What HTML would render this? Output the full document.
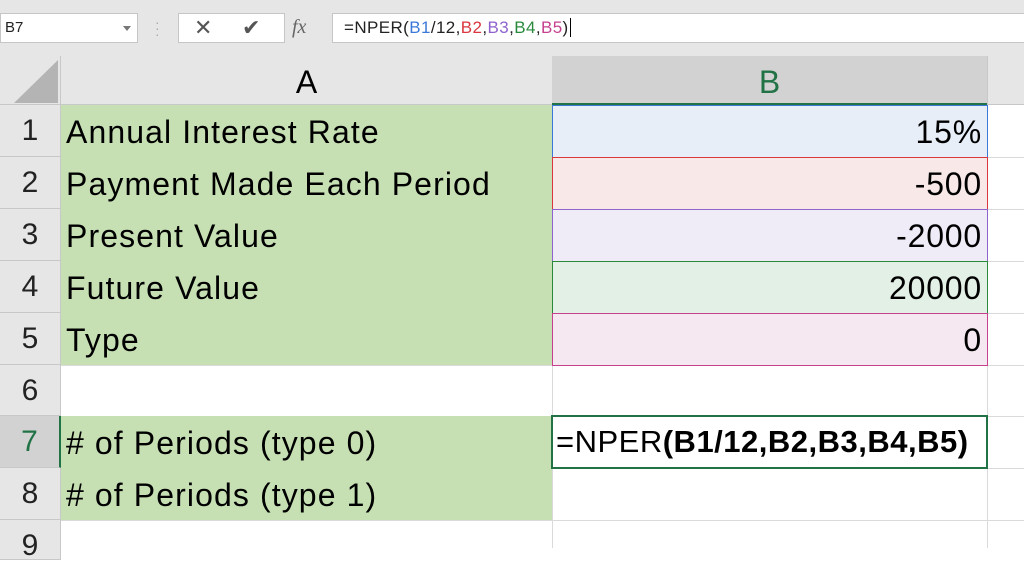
<!DOCTYPE html>
<html><head><style>
*{margin:0;padding:0;box-sizing:border-box}
body{width:1024px;height:548px;overflow:hidden;background:#fff;font-family:"Liberation Sans",sans-serif;position:relative}
.a{position:absolute}
.bar{left:0;top:0;width:1024px;height:56px;background:#e6e6e6}
.box{background:#fff;border:1px solid #c6c6c6}
.cell{position:absolute;font-size:32px;letter-spacing:1.1px;color:#000;line-height:52px;white-space:nowrap}
.num{letter-spacing:0.8px}
.rh{position:absolute;left:0;width:61px;text-align:center;font-size:30px;line-height:52px;background:#e6e6e6;border-bottom:1px solid #c8c8c8;border-right:1px solid #c8c8c8;color:#222}
.gl{position:absolute;background:#dadada}
</style></head><body>
<div class="a bar"></div>
<div class="a box" style="left:0;top:13px;width:138px;height:30px"></div>
<div class="a" style="left:5px;top:19px;font-size:15px;color:#222">B7</div>
<div class="a" style="left:123px;top:26px;width:0;height:0;border-left:4px solid transparent;border-right:4px solid transparent;border-top:5px solid #777"></div>
<div class="a" style="left:155px;top:19px;color:#aaa;font-size:14px;line-height:6px">·<br>·<br>·</div>
<div class="a box" style="left:178px;top:13px;width:107px;height:30px"></div>
<div class="a" style="left:194px;top:15px;font-size:22px;color:#555">✕</div>
<div class="a" style="left:242px;top:15px;font-size:22px;color:#555">✔</div>
<div class="a" style="left:292px;top:16px;font-size:20px;color:#666;font-family:'Liberation Serif',serif;font-style:italic">fx</div>
<div class="a box" style="left:332px;top:13px;width:700px;height:30px"></div>
<div class="a" style="left:344px;top:18px;font-size:17px;letter-spacing:0.4px;color:#222">=NPER(<span style="color:#3c78d8">B1</span>/12,<span style="color:#d9363e">B2</span>,<span style="color:#8e63ce">B3</span>,<span style="color:#2a8a3c">B4</span>,<span style="color:#c6408e">B5</span>)<span style="border-left:1px solid #000;margin-left:1px"></span></div>
<!-- header -->
<div class="a" style="left:0;top:56px;width:1024px;height:49px;background:#e6e6e6;border-bottom:1px solid #c8c8c8"></div>
<div class="a" style="left:14px;top:60px;width:0;height:0;border-left:44px solid transparent;border-bottom:43px solid #b4b4b4"></div>
<div class="a" style="left:60px;top:56px;width:1px;height:49px;background:#c8c8c8"></div>
<div class="a" style="left:61px;top:56px;width:491px;height:49px;text-align:center;font-size:32px;line-height:52px">A</div>
<div class="a" style="left:552px;top:56px;width:435px;height:49px;background:#d2d2d2;border-bottom:2px solid #217346;text-align:center;font-size:32px;line-height:52px;color:#217346">B</div>
<div class="a" style="left:987px;top:56px;width:1px;height:49px;background:#c8c8c8"></div>
<!-- row headers -->
<div class="rh" style="top:105px;height:52px">1</div>
<div class="rh" style="top:157px;height:52px">2</div>
<div class="rh" style="top:209px;height:52px">3</div>
<div class="rh" style="top:261px;height:52px">4</div>
<div class="rh" style="top:313px;height:52px">5</div>
<div class="rh" style="top:365px;height:51px">6</div>
<div class="rh" style="top:416px;height:52px;background:#d2d2d2;color:#217346;border-right:2px solid #217346">7</div>
<div class="rh" style="top:468px;height:52px">8</div>
<div class="rh" style="top:520px;height:40px">9</div>
<!-- grid lines -->
<div class="gl" style="left:61px;top:416px;width:963px;height:1px"></div>
<div class="gl" style="left:61px;top:365px;width:963px;height:1px"></div>
<div class="gl" style="left:61px;top:468px;width:963px;height:1px"></div>
<div class="gl" style="left:61px;top:520px;width:963px;height:1px"></div>
<div class="gl" style="left:987px;top:105px;width:1px;height:443px"></div>
<div class="gl" style="left:552px;top:365px;width:1px;height:183px"></div>
<div class="gl" style="left:987px;top:157px;width:37px;height:1px"></div>
<div class="gl" style="left:987px;top:209px;width:37px;height:1px"></div>
<div class="gl" style="left:987px;top:261px;width:37px;height:1px"></div>
<div class="gl" style="left:987px;top:313px;width:37px;height:1px"></div>
<!-- green A -->
<div class="a" style="left:61px;top:105px;width:491px;height:260px;background:#c6e0b4"></div>
<div class="a" style="left:61px;top:416px;width:491px;height:104px;background:#c6e0b4"></div>
<div class="cell" style="left:66px;top:106px">Annual Interest Rate</div>
<div class="cell" style="left:66px;top:158px">Payment Made Each Period</div>
<div class="cell" style="left:66px;top:210px">Present Value</div>
<div class="cell" style="left:66px;top:262px">Future Value</div>
<div class="cell" style="left:66px;top:314px">Type</div>
<div class="cell" style="left:66px;top:417px"># of Periods (type 0)</div>
<div class="cell" style="left:66px;top:469px"># of Periods (type 1)</div>
<!-- B cells -->
<div class="a" style="left:552px;top:105px;width:436px;height:53px;background:#e8eef8;border:1px solid #3c78d8"></div>
<div class="a" style="left:552px;top:157px;width:436px;height:53px;background:#f8e8e8;border:1px solid #d9363e"></div>
<div class="a" style="left:552px;top:209px;width:436px;height:53px;background:#efebf7;border:1px solid #8e63ce"></div>
<div class="a" style="left:552px;top:261px;width:436px;height:53px;background:#e3f0e5;border:1px solid #2a8a3c"></div>
<div class="a" style="left:552px;top:313px;width:436px;height:53px;background:#f6e8f0;border:1px solid #c6408e"></div>
<div class="cell num" style="left:552px;width:430px;text-align:right;top:106px">15%</div>
<div class="cell num" style="left:552px;width:430px;text-align:right;top:158px">-500</div>
<div class="cell num" style="left:552px;width:430px;text-align:right;top:210px">-2000</div>
<div class="cell num" style="left:552px;width:430px;text-align:right;top:262px">20000</div>
<div class="cell num" style="left:552px;width:430px;text-align:right;top:314px">0</div>
<div class="a" style="left:551px;top:415px;width:437px;height:54px;border:2px solid #217346;background:#fff"></div>
<div class="cell" style="left:556px;top:416px;font-size:31px;letter-spacing:0.5px">=NPER<b>(B1/12,B2,B3,B4,B5)</b></div>
</body></html>
